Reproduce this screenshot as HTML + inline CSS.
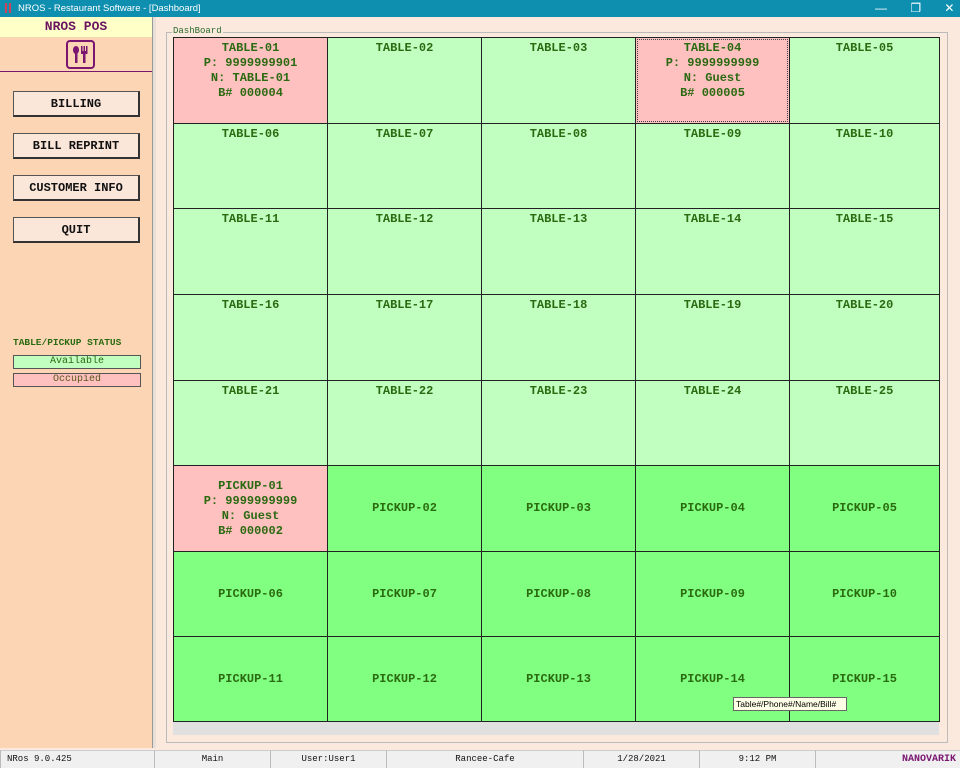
<!DOCTYPE html><html><head><style>
body{margin:0;width:960px;height:768px;position:relative;overflow:hidden;background:#fbe9dd;font-family:"Liberation Mono",monospace;}
.a{position:absolute;box-sizing:border-box}
.btn{left:13px;width:127px;height:26px;background:#fbe6da;border:1px solid #555;border-right:2px solid #333;border-bottom:2px solid #333;text-align:center;font-weight:bold;font-size:12px;line-height:24px;color:#111}
.c{border:1px solid #222;color:#2a6a10;font-weight:bold;font-size:12px;text-align:center;line-height:15px;padding-top:3px}
.p{display:flex;align-items:center;justify-content:center;padding:0}
.sb{top:750px;height:18px;background:#f0f0f0;border-left:1px solid #bbb;border-top:1px solid #ccc;font-size:9px;line-height:17px;text-align:center;color:#111}
</style></head><body>
<div class="a" style="left:0;top:0;width:960px;height:17px;background:#0e8fb0;color:#fff;font-family:'Liberation Sans',sans-serif;font-size:9.5px;line-height:17px;padding-left:18px">NROS - Restaurant Software - [Dashboard]</div>
<div class="a" style="left:5px;top:3px;width:2px;height:10px;background:#c45"></div><div class="a" style="left:9px;top:3px;width:2px;height:10px;background:#c45"></div>
<div class="a" style="left:875px;top:0;color:#fff;font-size:12px;line-height:17px;font-family:'Liberation Sans',sans-serif">—&nbsp;&nbsp;&nbsp;&nbsp;&nbsp;&nbsp;&nbsp;❐&nbsp;&nbsp;&nbsp;&nbsp;&nbsp;&nbsp;&nbsp;✕</div>
<div class="a" style="left:0;top:17px;width:153px;height:731px;background:#fcd5b5;border-right:1px solid #999"></div>
<div class="a" style="left:153px;top:17px;width:3px;height:731px;background:#e8e0d8"></div>
<div class="a" style="left:0;top:17px;width:152px;height:20px;background:#ffffc8;color:#6b1460;font-weight:bold;font-size:13px;text-align:center;line-height:20px">NROS POS</div>
<div class="a" style="left:66px;top:40px;width:29px;height:29px;border:2px solid #7a1570;border-radius:4px"></div>
<svg class="a" style="left:66px;top:40px" width="29" height="29" viewBox="0 0 29 29"><ellipse cx="10" cy="10" rx="3" ry="4" fill="#7a1570"/><rect x="9" y="12" width="2.5" height="11" fill="#7a1570"/><rect x="15" y="6" width="1.5" height="7" fill="#7a1570"/><rect x="17.5" y="6" width="1.5" height="7" fill="#7a1570"/><rect x="20" y="6" width="1.5" height="7" fill="#7a1570"/><rect x="15" y="11" width="6.5" height="3" fill="#7a1570"/><rect x="17" y="12" width="2.5" height="11" fill="#7a1570"/></svg>
<div class="a" style="left:0;top:71px;width:152px;height:1px;background:#7a1570"></div>
<div class="a btn" style="top:91px">BILLING</div>
<div class="a btn" style="top:133px">BILL REPRINT</div>
<div class="a btn" style="top:175px">CUSTOMER INFO</div>
<div class="a btn" style="top:217px">QUIT</div>
<div class="a" style="left:13px;top:337px;color:#2a6a10;font-weight:bold;font-size:9.5px">TABLE/PICKUP STATUS</div>
<div class="a" style="left:13px;top:355px;width:128px;height:14px;background:#c0ffc0;border:1px solid #555;font-size:10px;text-align:center;line-height:12px;color:#2a6a10">Available</div>
<div class="a" style="left:13px;top:373px;width:128px;height:14px;background:#ffc0c0;border:1px solid #555;font-size:10px;text-align:center;line-height:12px;color:#5a5a1a">Occupied</div>
<div class="a" style="left:166px;top:32px;width:782px;height:711px;border:1px solid #bbb"></div>
<div class="a" style="left:172px;top:26px;font-size:9px;color:#2a6a2a;background:#fbe9dd;padding:0 1px">DashBoard</div>
<div class="a" style="left:173px;top:721px;width:766px;height:14px;background:#e0e0e0"></div>
<div id="g"></div>
<div class="a" style="left:733px;top:697px;width:114px;height:14px;background:#ffffe8;border:1px solid #666;font-family:'Liberation Sans',sans-serif;font-size:8.5px;line-height:12px;padding-left:2px">Table#/Phone#/Name/Bill#</div>
<div class="a sb" style="left:0;width:154px;text-align:left;padding-left:6px">NRos 9.0.425</div>
<div class="a sb" style="left:154px;width:116px">Main</div>
<div class="a sb" style="left:270px;width:116px">User:User1</div>
<div class="a sb" style="left:386px;width:197px">Rancee-Cafe</div>
<div class="a sb" style="left:583px;width:116px">1/28/2021</div>
<div class="a sb" style="left:699px;width:116px">9:12 PM</div>
<div class="a sb" style="left:815px;width:145px;text-align:right;padding-right:4px;color:#7a1570;font-weight:bold;font-size:10px">NANOVARIK</div>
<script>
var xs=[173,327,481,635,789,939],ys=[37,123,208,294,380,465,551,636,721],h='';
var occ={0:'TABLE-01<br>P: 9999999901<br>N: TABLE-01<br>B# 000004',3:'TABLE-04<br>P: 9999999999<br>N: Guest<br>B# 000005',25:'PICKUP-01<br>P: 9999999999<br>N: Guest<br>B# 000002'};
for(var r=0;r<8;r++)for(var c=0;c<5;c++){var i=r*5+c,pk=r>=5,n=pk?'PICKUP-'+String(i-24).padStart(2,'0'):'TABLE-'+String(i+1).padStart(2,'0');
var bg=occ[i]?'#ffc0c0':(pk?'#80ff80':'#c0ffc0');var cls='a c'+((pk&&!occ[i])||i==25?' p':'');var t=occ[i]||n;
h+='<div class="'+cls+'" style="left:'+xs[c]+'px;top:'+ys[r]+'px;width:'+(xs[c+1]-xs[c]+1)+'px;height:'+(ys[r+1]-ys[r]+1)+'px;background:'+bg+(i==3?';outline:1px dotted #444;outline-offset:-3px':'')+'">'+(i==25?'<div>'+t+'</div>':t)+'</div>';}
document.getElementById('g').innerHTML=h;
</script>
</body></html>
